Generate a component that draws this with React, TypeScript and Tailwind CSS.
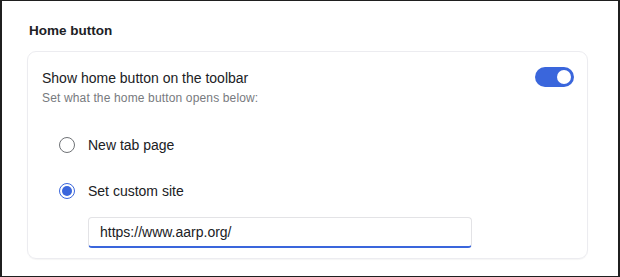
import { useState } from "react";

export default function App() {
  const [on, setOn] = useState(true);
  const [choice, setChoice] = useState<"ntp" | "custom">("custom");
  const [url, setUrl] = useState("https://www.aarp.org/");

  return (
    <div
      className="w-[620px] h-[277px] bg-white border border-l-2 border-r-2 border-[#1f1f1f] text-[#202124] overflow-hidden"
      style={{ fontFamily: "'Liberation Sans', Arial, sans-serif" }}
    >
      <div className="pl-[25px] pr-[30px] pt-[21px]">
        <h2 className="pl-[2px] text-[13.5px] font-bold leading-[18px] text-[#202124]">Home button</h2>

        <div className="mt-[11px] rounded-[9px] border border-[#ececf0] pl-[14px] pr-[14px] pt-[16px] pb-[10px] shadow-[0_1px_1px_rgba(0,0,0,0.04)]">
          <div className="flex items-start justify-between">
            <div>
              <div className="text-[14px] leading-[20px] text-[#202124]">Show home button on the toolbar</div>
              <div className="mt-[1px] text-[12px] leading-[18px] tracking-[0.15px] text-[#777a7e]">
                Set what the home button opens below:
              </div>
            </div>
            <button
              onClick={() => setOn(!on)}
              className={`mt-[-1px] mr-[-1px] flex h-[20px] w-[39px] items-center rounded-full px-[3px] ${
                on ? "justify-end bg-[#3a66dc]" : "justify-start bg-[#c4c7cc]"
              }`}
            >
              <span className="h-[14px] w-[14px] rounded-full bg-white" />
            </button>
          </div>

          <div className="mt-[28px] pl-[17px]">
            <label className="flex h-[20px] items-center gap-[13px] cursor-pointer" onClick={() => setChoice("ntp")}>
              <Radio checked={choice === "ntp"} />
              <span className="text-[14px] text-[#202124]">New tab page</span>
            </label>
            <label
              className="mt-[26px] flex h-[20px] items-center gap-[13px] cursor-pointer"
              onClick={() => setChoice("custom")}
            >
              <Radio checked={choice === "custom"} />
              <span className="text-[14px] text-[#202124]">Set custom site</span>
            </label>
            <div className="mt-[16px] ml-[29px] w-[384px]">
              <input
                value={url}
                onChange={(e) => setUrl(e.target.value)}
                className="h-[31px] w-full rounded-[4px] border border-[#e3e3e6] border-b-2 border-b-[#3a66dc] bg-white px-[11px] text-[14px] text-[#202124] outline-none"
              />
            </div>
          </div>
        </div>
      </div>
    </div>
  );
}

function Radio({ checked }: { checked: boolean }) {
  return checked ? (
    <span className="flex h-[16px] w-[16px] items-center justify-center rounded-full border-[1.5px] border-[#3a66dc] bg-white">
      <span className="h-[10px] w-[10px] rounded-full bg-[#3a66dc]" />
    </span>
  ) : (
    <span className="h-[16px] w-[16px] rounded-full border-[1.5px] border-[#6f7276] bg-white" />
  );
}
